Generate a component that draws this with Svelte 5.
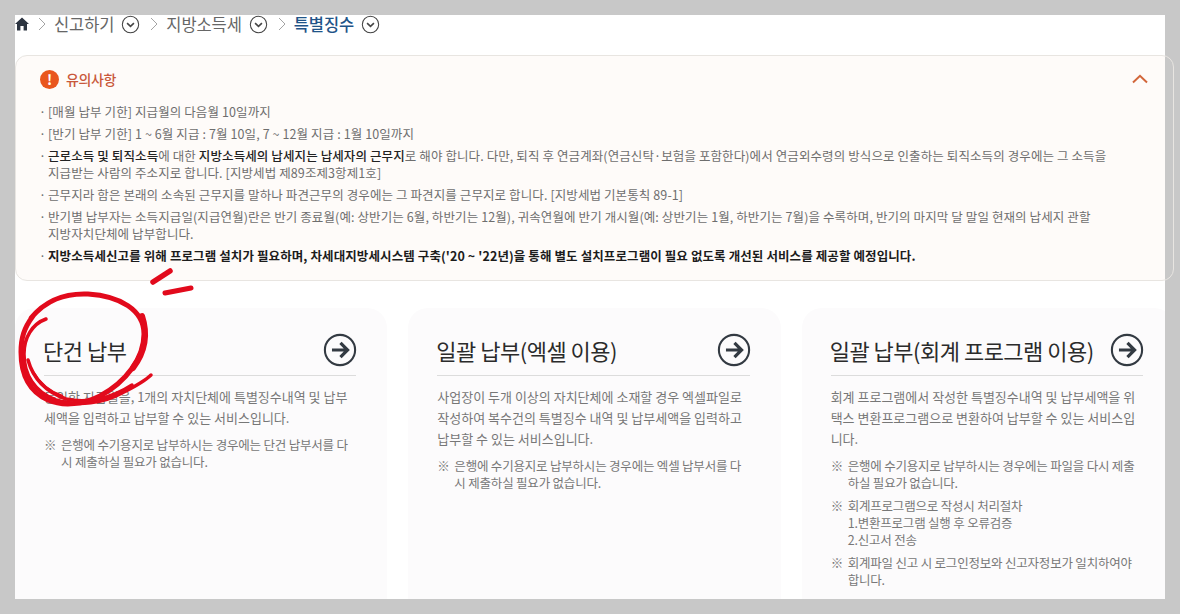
<script>
  const notices = [
    { html: '[매월 납부 기한] 지급월의 다음월 10일까지' },
    { html: '[반기 납부 기한] 1 ~ 6월 지급 : 7월 10일, 7 ~ 12월 지급 : 1월 10일까지' },
    {
      html: '<b>근로소득 및 퇴직소득</b>에 대한 <b>지방소득세의 납세지는 납세자의 근무지</b>로 해야 합니다. 다만, 퇴직 후 연금계좌(연금신탁·보험을 포함한다)에서 연금외수령의 방식으로 인출하는 퇴직소득의 경우에는 그 소득을<br>지급받는 사람의 주소지로 합니다. [지방세법 제89조제3항제1호]'
    },
    { html: '근무지라 함은 본래의 소속된 근무지를 말하나 파견근무의 경우에는 그 파견지를 근무지로 합니다. [지방세법 기본통칙 89-1]' },
    {
      html: '반기별 납부자는 소득지급일(지급연월)란은 반기 종료월(예: 상반기는 6월, 하반기는 12월), 귀속연월에 반기 개시월(예: 상반기는 1월, 하반기는 7월)을 수록하며, 반기의 마지막 달 말일 현재의 납세지 관할<br>지방자치단체에 납부합니다.'
    },
    {
      html: '<b class="strong">지방소득세신고를 위해 프로그램 설치가 필요하며, 차세대지방세시스템 구축(\'20 ~ \'22년)을 통해 별도 설치프로그램이 필요 없도록 개선된 서비스를 제공할 예정입니다.</b>'
    }
  ];

  const crumbs = [
    { label: '신고하기' },
    { label: '지방소득세' },
    { label: '특별징수', current: true }
  ];

  const cards = [
    {
      title: '단건 납부',
      desc: '동일한 지급월을, 1개의 자치단체에 특별징수내역 및 납부<br>세액을 입력하고 납부할 수 있는 서비스입니다.',
      notes: ['은행에 수기용지로 납부하시는 경우에는 단건 납부서를 다<br>시 제출하실 필요가 없습니다.']
    },
    {
      title: '일괄 납부(엑셀 이용)',
      desc: '사업장이 두개 이상의 자치단체에 소재할 경우 엑셀파일로<br>작성하여 복수건의 특별징수 내역 및 납부세액을 입력하고<br>납부할 수 있는 서비스입니다.',
      notes: ['은행에 수기용지로 납부하시는 경우에는 엑셀 납부서를 다<br>시 제출하실 필요가 없습니다.']
    },
    {
      title: '일괄 납부(회계 프로그램 이용)',
      desc: '회계 프로그램에서 작성한 특별징수내역 및 납부세액을 위<br>택스 변환프로그램으로 변환하여 납부할 수 있는 서비스입<br>니다.',
      notes: [
        '은행에 수기용지로 납부하시는 경우에는 파일을 다시 제출<br>하실 필요가 없습니다.',
        '회계프로그램으로 작성시 처리절차<br>1.변환프로그램 실행 후 오류검증<br>2.신고서 전송',
        '회계파일 신고 시 로그인정보와 신고자정보가 일치하여야<br>합니다.'
      ]
    }
  ];
</script>

<div class="page">
  <nav class="crumbs">
    <svg class="home" viewBox="0 0 14 14" aria-label="home">
      <path d="M7 0.5 L14 7 L12 7 L12 13.5 L8.6 13.5 L8.6 9 L5.4 9 L5.4 13.5 L2 13.5 L2 7 L0 7 Z" fill="#2c3440" />
    </svg>
    {#each crumbs as crumb}
      <svg class="sep" viewBox="0 0 8 14"><path d="M1 1 L7 7 L1 13" fill="none" stroke="#9a9a9a" stroke-width="0.9" /></svg>
      <span class="crumb" class:current={crumb.current}>{crumb.label}</span>
      <svg class="drop" viewBox="0 0 20 20">
        <circle cx="10" cy="10" r="8.6" fill="none" stroke="#444" stroke-width="1.1" />
        <path d="M6.4 8.6 L10 12 L13.6 8.6" fill="none" stroke="#444" stroke-width="1.7" />
      </svg>
    {/each}
  </nav>

  <section class="notice">
    <header class="notice-head">
      <span class="alert">!</span>
      <h2>유의사항</h2>
      <svg class="fold" viewBox="0 0 16 10"><path d="M1 8.5 L8 1.8 L15 8.5" fill="none" stroke="#d2663a" stroke-width="2" /></svg>
    </header>
    <ul>
      {#each notices as item}
        <li>{@html item.html}</li>
      {/each}
    </ul>
  </section>

  <div class="cards">
    <div class="cards-inner">
      {#each cards as card}
        <article class="card">
          <div class="card-head">
            <h3>{card.title}</h3>
            <svg class="go" viewBox="0 0 36 36">
              <circle cx="18" cy="18" r="16" fill="none" stroke="#333a42" stroke-width="2.2" />
              <path d="M9.5 18 H25 M18.5 10.5 L26 18 L18.5 25.5" fill="none" stroke="#333a42" stroke-width="3.4" />
            </svg>
          </div>
          <p class="desc">{@html card.desc}</p>
          {#each card.notes as note}
            <div class="note"><span class="mark">※</span><span>{@html note}</span></div>
          {/each}
        </article>
      {/each}
    </div>
  </div>

  <svg class="scribble" viewBox="0 0 210 420" aria-hidden="true">
    <g fill="none" stroke="#e20a1c" stroke-linecap="round">
      <path stroke-width="5" d="M31 318 C46 300 64 293 88 294 C120 296 144 310 144 334 C144 358 126 382 100 396 C84 404 64 407 48 400 C28 391 21 372 21 352 C21 338 24 328 33 316" />
      <path stroke-width="3.5" d="M46 319 C32 324 24 338 24 354 C24 374 34 392 56 400 C78 407 104 403 122 393 C134 387 144 382 151 375" />
      <path stroke-width="3.5" d="M28 360 C33 378 46 392 66 399 C88 404 112 398 132 385" />
      <path stroke-width="2.5" d="M33 372 C40 384 50 392 62 396" />
      <path stroke-width="6" d="M142 316 C148 334 145 352 133 368" />
      <path stroke-width="5.5" d="M153 282 L170 271" />
      <path stroke-width="5" d="M165 293 L191 288" />
    </g>
  </svg>
</div>

<style>
  :global(body) {
    margin: 0;
    background: #c8c8c8;
    overflow: hidden;
  }

  .page {
    position: relative;
    box-sizing: border-box;
    width: 1150px;
    height: 584px;
    margin: 15px;
    display: flex;
    flex-direction: column;
    background: #fff;
    font-family: 'Noto Sans CJK KR', 'Noto Sans', sans-serif;
    color: #777;
  }

  .crumbs {
    height: 18px;
    display: flex;
    align-items: center;
    font-size: 16.5px;
    line-height: 18px;
    letter-spacing: -0.1px;
    color: #666;
  }

  .home {
    width: 14px;
    height: 14px;
  }

  .sep {
    width: 8px;
    height: 14px;
    margin: 0 8px;
  }

  .home + .sep {
    margin-left: 9px;
  }

  .crumb.current {
    color: #1f5488;
    font-weight: 500;
  }

  .drop {
    width: 19px;
    height: 19px;
    margin-left: 7px;
    margin-right: 2px;
  }

  .notice {
    box-sizing: border-box;
    width: 1159px;
    height: 226px;
    margin-top: 22px;
    padding: 13px 0 0 24px;
    border: 1px solid #e8e5e1;
    border-radius: 12px;
    background: linear-gradient(to right, #fefbf9 1149px, transparent 1149px);
  }

  .notice-head {
    display: flex;
    align-items: center;
    height: 20px;
    gap: 7px;
    padding-right: 25px;
  }

  .alert {
    width: 19px;
    height: 19px;
    border-radius: 50%;
    background: #e9561e;
    color: #fff;
    font-size: 14px;
    font-weight: 700;
    line-height: 19px;
    text-align: center;
  }

  h2 {
    flex: 1;
    margin: 0;
    font-size: 14px;
    font-weight: 500;
    letter-spacing: -0.4px;
    color: #c9583b;
  }

  .fold {
    width: 16px;
    height: 10px;
  }

  ul {
    list-style: none;
    margin: 14px 0 0;
    padding: 0;
    font-size: 12.5px;
    line-height: 17px;
    letter-spacing: 0.1px;
    color: #6e6e6e;
  }

  li {
    position: relative;
    margin-bottom: 5px;
    padding-left: 8px;
    white-space: nowrap;
  }

  li::before {
    content: '·';
    position: absolute;
    left: -1px;
  }

  li :global(b) {
    font-weight: 500;
    color: #222;
  }

  li :global(b.strong) {
    font-weight: 700;
    color: #1c1c1c;
  }

  .cards {
    flex: 1;
    min-height: 0;
    margin-top: 27px;
    overflow: hidden;
  }

  .cards-inner {
    width: 1159px;
    height: 100%;
    display: grid;
    grid-template-columns: repeat(3, 1fr);
    gap: 21px;
  }

  .card {
    box-sizing: border-box;
    height: 320px;
    padding: 25px 31px 0 29px;
    border-radius: 20px;
    background: #fcfbfc;
  }

  .card-head {
    height: 34px;
    display: flex;
    align-items: center;
    justify-content: space-between;
    border-bottom: 1px solid #dcdcdc;
    padding-bottom: 8px;
  }

  h3 {
    margin: 0 0 0 -1px;
    font-size: 22px;
    font-weight: 400;
    letter-spacing: -0.5px;
    color: #2b2b2b;
    white-space: nowrap;
  }

  .go {
    width: 34px;
    height: 34px;
    flex: none;
    margin-right: -1px;
  }

  .desc {
    margin: 10px 0 0;
    font-size: 13px;
    line-height: 21px;
    white-space: nowrap;
  }

  .note {
    display: flex;
    margin-top: 6px;
    font-size: 12.5px;
    line-height: 17px;
    letter-spacing: -0.2px;
    white-space: nowrap;
  }

  .desc + .note {
    margin-top: 8px;
  }

  .mark {
    width: 17px;
    flex: none;
  }

  .scribble {
    position: absolute;
    left: -15px;
    top: -15px;
    width: 210px;
    height: 420px;
    pointer-events: none;
  }
</style>
